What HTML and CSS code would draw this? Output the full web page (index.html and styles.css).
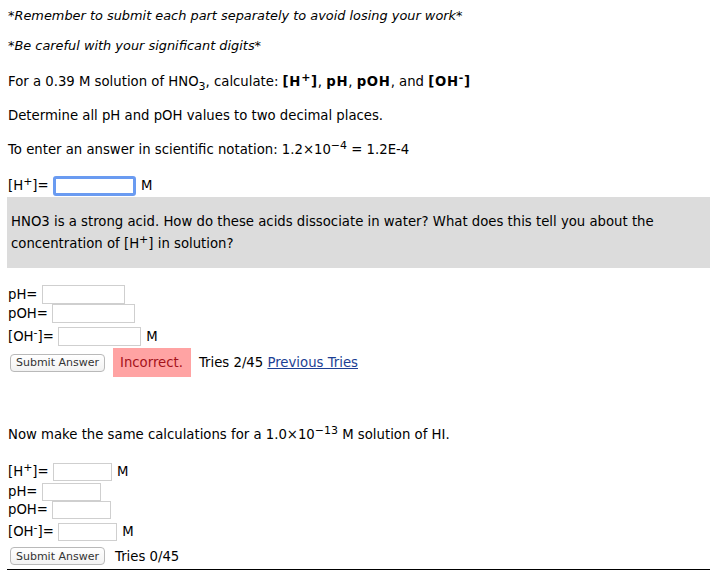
FILE: index.html
```html
<!DOCTYPE html>
<html lang="en">
<head>
    <meta charset="UTF-8">
    <meta name="viewport" content="width=device-width, initial-scale=1.0">
    <title>Acids and Bases</title>
    <link rel="stylesheet" href="styles.css">
</head>
<body>
    <div class="page">
        <p class="note first"><i>*Remember to submit each part separately to avoid losing your work*</i></p>
        <p class="note last"><i>*Be careful with your significant digits*</i></p>
        <p>For a 0.39 M solution of HNO<sub>3</sub>, calculate: <b>[H<sup>+</sup>]</b>, <b>pH</b>, <b>pOH</b>, and <b>[OH<sup>-</sup>]</b></p>
        <p>Determine all pH and pOH values to two decimal places.</p>
        <p>To enter an answer in scientific notation: 1.2&times;10<sup>&minus;4</sup> = 1.2E-4</p>

        <div class="row row-h">[H<sup>+</sup>]= <input type="text" class="wide focused"> M</div>

        <div class="hint">
            HNO3 is a strong acid. How do these acids dissociate in water? What does this tell you about the concentration of [H<sup>+</sup>] in solution?
        </div>

        <div class="fields first-set">
            <div class="row">pH= <input type="text" class="wide"></div>
            <div class="row">pOH= <input type="text" class="wide"></div>
            <div class="row row-oh">[OH<sup>-</sup>]= <input type="text" class="wide"> M</div>
            <div class="submit-row">
                <button>Submit Answer</button>
                <span class="incorrect">Incorrect.</span>
                <span>Tries 2/45 <a href="#">Previous Tries</a></span>
            </div>
        </div>

        <p class="second-lead">Now make the same calculations for a 1.0&times;10<sup>&minus;13</sup> M solution of HI.</p>

        <div class="fields second-set">
            <div class="row">[H<sup>+</sup>]= <input type="text"> M</div>
            <div class="row row-ph">pH= <input type="text"></div>
            <div class="row">pOH= <input type="text"></div>
            <div class="row row-oh">[OH<sup>-</sup>]= <input type="text"> M</div>
            <div class="submit-row small">
                <button>Submit Answer</button>
                <span>Tries 0/45</span>
            </div>
        </div>

        <hr>
    </div>
</body>
</html>
```

FILE: styles.css
```css
body {
    margin: 0;
    font-family: "DejaVu Sans", Verdana, sans-serif;
    font-size: 13.25px;
    color: #000;
    background-color: #fff;
}
.page {
    padding: 0 1px 0 8px;
}
p {
    margin: 0 0 18px;
    line-height: 16px;
}
.note {
    margin-bottom: 14px;
    font-size: 12.9px;
}
.note.first {
    padding-top: 8px;
}
.note.last {
    margin-bottom: 20px;
}
b {
    letter-spacing: 0.7px;
}
sup, sub {
    font-size: 11px;
    line-height: 0;
}
.row {
    height: 19px;
    line-height: 19px;
}
.row-h {
    margin-top: 17px;
    height: 20px;
    line-height: 20px;
}
input {
    width: 59px;
    height: 19px;
    box-sizing: border-box;
    border: 1px solid #cfcfcf;
    margin: 0 1px 0 0;
    padding: 0;
    font: inherit;
    vertical-align: top;
}
input.wide {
    width: 83px;
}
input.focused {
    height: 20px;
    border: 3px solid #6a9bf1;
    border-radius: 3px;
}
.hint {
    background-color: #dcdcdc;
    margin: 1px 0 0 -1px;
    padding: 14px 50px 13px 4px;
    line-height: 22px;
}
.first-set {
    margin-top: 17px;
}
.second-set .row {
    height: 18px;
    line-height: 18px;
}
.second-set input {
    height: 18px;
}
.row-oh {
    margin-top: 4px;
}
.submit-row {
    display: flex;
    align-items: center;
    gap: 8px;
    margin-top: 2px;
    height: 29px;
}
.submit-row.small {
    height: 18px;
    margin-top: 6px;
    gap: 10px;
}
button {
    margin-left: 2px;
    height: 18px;
    width: 95px;
    padding: 0;
    font-family: "DejaVu Sans", Verdana, sans-serif;
    font-size: 11px;
    color: #333;
    background: linear-gradient(#fff, #f2f2f2);
    border: 1px solid #b9b9b9;
    border-radius: 4px;
}
.incorrect {
    background-color: #ffa3a3;
    color: #a5121a;
    padding: 6px 8px 6px 7px;
    line-height: 17px;
}
a {
    color: #1c3f94;
}
.second-lead {
    margin: 50px 0 20px;
}
.row-ph {
    margin-top: 2px;
}
hr {
    margin: 4px 0 0 -1px;
    border: 0;
    border-top: 1px solid #000;
}
```
